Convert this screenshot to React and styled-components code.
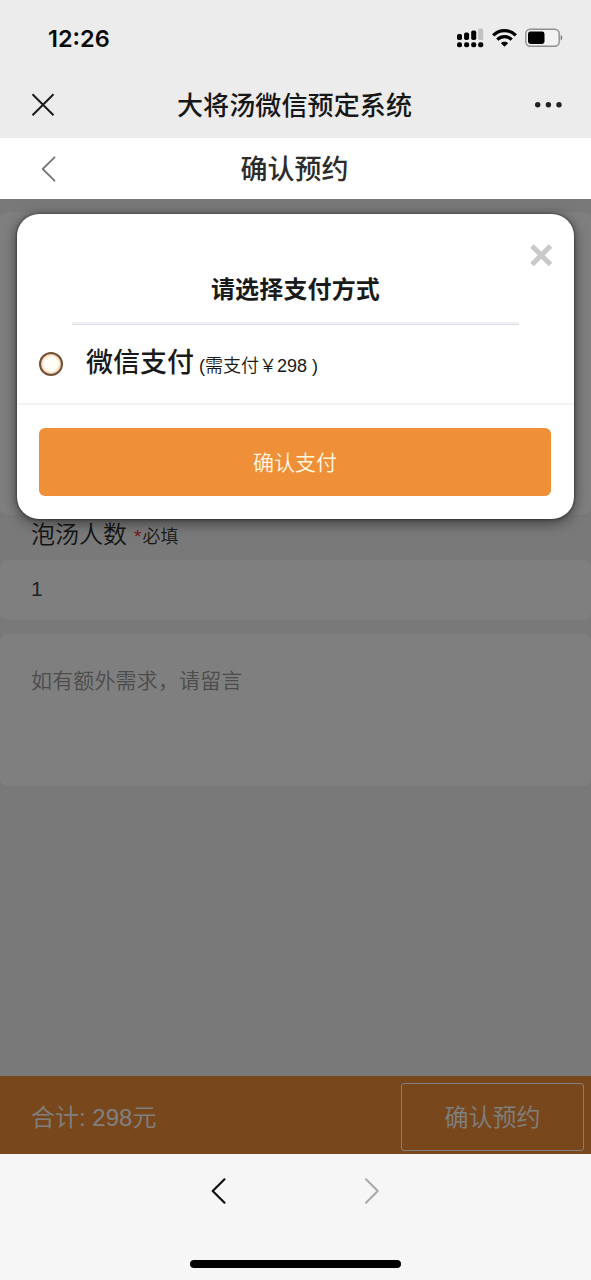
import React from "react";
import styled, { createGlobalStyle } from "styled-components";

const GlobalStyle = createGlobalStyle`
  * { box-sizing: border-box; }
  body { margin: 0; font-family: "Liberation Sans", "Noto Sans CJK SC", sans-serif; color: #1a1a1a; }
  button { font: inherit; padding: 0; border: 0; background: none; color: inherit; }
  h1, h2, p { margin: 0; font: inherit; }
  svg { display: block; }
`;

const Screen = styled.div`
  width: 591px;
  height: 1280px;
  display: flex;
  flex-direction: column;
  overflow: hidden;
  background: #f6f6f6;
`;

const StatusBar = styled.div`
  height: 72px;
  padding: 4px 28px 0 48px;
  display: flex;
  align-items: center;
  justify-content: space-between;
  background: #ececec;
`;

const Clock = styled.span`
  font: 600 23.5px/30px Inter, sans-serif;
  padding-top: 1px;
  color: #0a0a0a;
`;

const StatusIcons = styled.div`
  display: flex;
  align-items: center;
  gap: 8px;
`;

const NavBar = styled.header`
  height: 66px;
  padding: 0 29px 0 31px;
  display: grid;
  grid-template-columns: 56px 1fr 60px;
  align-items: center;
  background: #ececec;
`;

const NavTitle = styled.h1`
  padding-top: 2px;
  text-align: center;
  font-size: 26px;
  line-height: 36px;
  font-weight: 500;
  letter-spacing: 0.12px;
  white-space: nowrap;
  color: #171717;
`;

const NavEnd = styled.div`
  display: flex;
  justify-content: flex-end;
`;

const PageHeader = styled.div`
  height: 61px;
  padding: 0 41px;
  display: grid;
  grid-template-columns: 38px 1fr 40px;
  align-items: center;
  background: #fff;
`;

const PageTitle = styled.h2`
  padding-top: 2px;
  text-align: center;
  font-size: 27px;
  line-height: 38px;
  font-weight: 500;
  color: #2c2c2c;
`;

const Body = styled.main`
  position: relative;
  height: 955px;
  display: flex;
  flex-direction: column;
  background: #f2f2f2;
`;

const Card = styled.section`
  height: ${(p) => p.$h}px;
  margin-top: ${(p) => p.$gap || 0}px;
  padding: ${(p) => p.$pad || "0 31px"};
  border-radius: 8px;
  background: #fff;
`;

const FieldLabel = styled.div`
  height: 45px;
  padding: 2px 31px 0;
  display: flex;
  align-items: baseline;
  font-size: 24px;
  line-height: 36px;
  font-weight: 350;
  color: #2a2a2a;
`;

const Required = styled.span`
  margin-left: 7px;
  font-size: 18px;
  color: #333;
`;

const Star = styled.span`
  margin-right: 1px;
  font-size: 19px;
  color: #e83030;
`;

const FieldValue = styled.p`
  font-size: 21px;
  line-height: 58px;
  color: #444;
`;

const Placeholder = styled.p`
  font-size: 21px;
  line-height: 30px;
  font-weight: 350;
  letter-spacing: 0.15px;
  color: #999;
`;

const TotalBar = styled.footer`
  margin-top: auto;
  height: 78px;
  padding: 0 7px 0 31px;
  display: flex;
  align-items: center;
  justify-content: space-between;
  background: #f08f36;
  color: #fff;
  font-size: 24px;
  font-weight: 350;
`;

const ReserveButton = styled.button`
  width: 183px;
  height: 68px;
  margin-top: 3px;
  padding-bottom: 3px;
  border: 1.5px solid #fff;
  border-radius: 3px;
`;

const Mask = styled.div`
  position: absolute;
  inset: 0;
  padding: 15px 17px;
  background: rgba(0, 0, 0, 0.5);
`;

const Dialog = styled.div`
  height: 305px;
  border-radius: 22px;
  background: #fff;
  box-shadow: 0 3px 14px rgba(0, 0, 0, 0.55), 0 0 3px rgba(0, 0, 0, 0.6);
  display: flex;
  flex-direction: column;
`;

const DialogTop = styled.div`
  height: 58px;
  padding: 29px 21px 0;
  display: flex;
  justify-content: flex-end;
`;

const DialogTitle = styled.h2`
  height: 53px;
  margin: 0 55px;
  padding-top: 1px;
  line-height: 34px;
  text-align: center;
  font-size: 24px;
  font-weight: 700;
  letter-spacing: 0.15px;
  border-bottom: 1px solid #dcdce6;
  box-shadow: inset 0 -2px 0 #f1f1f4;
`;

const PayOption = styled.label`
  height: 80px;
  padding: 0 22px;
  display: flex;
  align-items: center;
  border-bottom: 2px solid #f3f3f3;
`;

const Radio = styled.span`
  width: 24px;
  height: 24px;
  margin-right: 23px;
  border-radius: 50%;
  border: 2px solid #70503a;
  background: #fffdf8;
  box-shadow: inset 0 0 2px 1px #f3ba80;
`;

const PayText = styled.p`
  display: flex;
  align-items: baseline;
  padding-bottom: 2px;
`;

const PayName = styled.span`
  font-size: 27px;
  line-height: 40px;
  font-weight: 500;
`;

const PayNote = styled.span`
  margin-left: 5px;
  font-size: 18px;
  line-height: 24px;
  font-weight: 350;
  white-space: pre;
`;

const PayButton = styled.button`
  height: 68px;
  margin: 23px 23px 0 22px;
  padding-bottom: 2px;
  border-radius: 6px;
  background: #ef8f38;
  color: #fff8e2;
  font-size: 21px;
  font-weight: 350;
`;

const BrowserBar = styled.nav`
  height: 126px;
  padding-top: 23px;
  display: flex;
  flex-direction: column;
  align-items: center;
  justify-content: space-between;
`;

const Arrows = styled.div`
  display: flex;
  gap: 137px;
`;

const HomeIndicator = styled.div`
  width: 211px;
  height: 8px;
  margin-bottom: 12px;
  border-radius: 4px;
  background: #000;
`;

const Signal = () => (
  <svg width="27" height="20" viewBox="0 0 27 20">
    {[0, 7.1, 14.2, 21.2].map((x) => (
      <rect key={x} x={x} y="14.2" width="5" height="5" rx="2" />
    ))}
    <rect x="0" y="6" width="5" height="6" rx="1.8" />
    <rect x="7.1" y="4.5" width="5" height="7.5" rx="1.8" />
    <rect x="14.2" y="2.5" width="5" height="9.5" rx="1.8" />
    <rect x="21.2" y="0.5" width="5" height="11.5" rx="1.5" fill="#c2c2c2" />
  </svg>
);

const Wifi = () => (
  <svg width="25" height="20" viewBox="0 0 25 20" fill="none" stroke="#000" strokeWidth="3.2">
    <path d="M1.2 7.4C7.5 0.9 17.5 0.9 23.8 7.4" />
    <path d="M5.3 11.7C9.3 7.7 15.7 7.7 19.7 11.7" />
    <path d="M12.5 18.8L8.9 15.2C10.9 13.4 14.1 13.4 16.1 15.2Z" fill="#000" stroke="none" />
  </svg>
);

const Battery = () => (
  <svg width="38" height="20" viewBox="0 0 38 20">
    <rect x="0.8" y="1.3" width="33.4" height="16.9" rx="4.5" fill="#f2f2f2" stroke="#8e8e8e" strokeWidth="1.4" />
    <rect x="3" y="3.6" width="16.5" height="12.4" rx="2.4" />
    <path d="M35.7 7V12.4C37.8 11.4 37.8 8 35.7 7Z" fill="#777" />
  </svg>
);

const Close = () => (
  <svg width="24" height="24" viewBox="0 0 24 24" stroke="#1b1b1b" strokeWidth="2" fill="none">
    <path d="M1.5 1.2L22.5 22.2M22.5 1.2L1.5 22.2" />
  </svg>
);

const More = () => (
  <svg width="28" height="8" viewBox="0 0 28 8" fill="#222">
    <circle cx="3.7" cy="3.8" r="2.7" />
    <circle cx="14.4" cy="3.8" r="2.7" />
    <circle cx="25" cy="3.8" r="2.7" />
  </svg>
);

const Chevron = ({ right, color, width = 2 }) => (
  <svg width="16" height="28" viewBox="0 0 16 28" fill="none" stroke={color} strokeWidth={width} strokeLinecap="round" strokeLinejoin="round">
    <path d={right ? "M2 2.3L13.8 14L2 25.7" : "M13.5 2.3L1.7 14L13.5 25.7"} />
  </svg>
);

const DialogClose = () => (
  <svg width="24" height="24" viewBox="0 0 24 24" stroke="#c9c9c9" strokeWidth="5" fill="none">
    <path d="M3 3L21.5 21.5M21.5 3L3 21.5" />
  </svg>
);

export default function App() {
  return (
    <>
      <GlobalStyle />
      <Screen>
        <StatusBar>
          <Clock>12:26</Clock>
          <StatusIcons>
            <Signal />
            <Wifi />
            <Battery />
          </StatusIcons>
        </StatusBar>
        <NavBar>
          <Close />
          <NavTitle>大将汤微信预定系统</NavTitle>
          <NavEnd>
            <More />
          </NavEnd>
        </NavBar>
        <PageHeader>
          <Chevron color="#777" width={1.8} />
          <PageTitle>确认预约</PageTitle>
        </PageHeader>
        <Body>
          <Card $gap={13} $h={303} />
          <FieldLabel>
            泡汤人数
            <Required>
              <Star>*</Star>必填
            </Required>
          </FieldLabel>
          <Card $h={60}>
            <FieldValue>1</FieldValue>
          </Card>
          <Card $gap={14} $h={152} $pad="32px 31px">
            <Placeholder>如有额外需求，请留言</Placeholder>
          </Card>
          <TotalBar>
            <span>合计: 298元</span>
            <ReserveButton>确认预约</ReserveButton>
          </TotalBar>
          <Mask>
            <Dialog>
              <DialogTop>
                <DialogClose />
              </DialogTop>
              <DialogTitle>请选择支付方式</DialogTitle>
              <PayOption>
                <Radio />
                <PayText>
                  <PayName>微信支付</PayName>
                  <PayNote>(需支付￥298 )</PayNote>
                </PayText>
              </PayOption>
              <PayButton>确认支付</PayButton>
            </Dialog>
          </Mask>
        </Body>
        <BrowserBar>
          <Arrows>
            <Chevron color="#111" width={2.2} />
            <Chevron right color="#a8a8a8" />
          </Arrows>
          <HomeIndicator />
        </BrowserBar>
      </Screen>
    </>
  );
}
